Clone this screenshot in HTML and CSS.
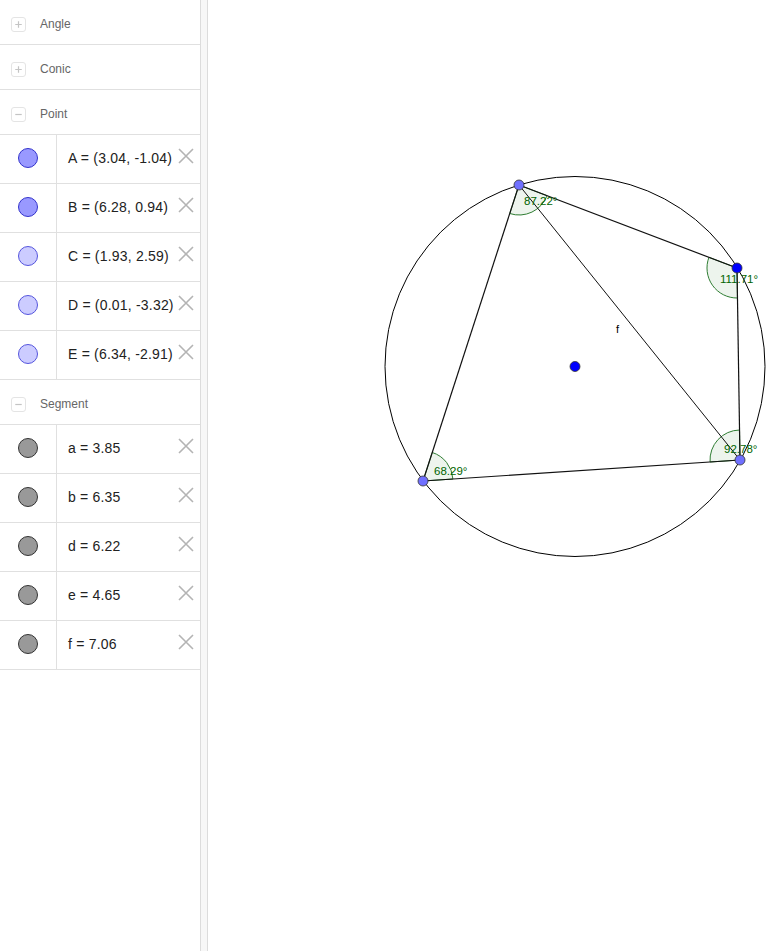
FILE: index.html
```html
<!DOCTYPE html>
<html>
<head>
<meta charset="utf-8">
<link rel="stylesheet" href="styles.css">
</head>
<body>
<div class="app">
  <div class="algebra">
    <div class="group"><span class="toggle"><svg viewBox="0 0 14 14"><path d="M7 3.5v7M3.5 7h7"/></svg></span><span class="gname">Angle</span></div>
    <div class="group"><span class="toggle"><svg viewBox="0 0 14 14"><path d="M7 3.5v7M3.5 7h7"/></svg></span><span class="gname">Conic</span></div>
    <div class="group"><span class="toggle"><svg viewBox="0 0 14 14"><path d="M3.5 7h7"/></svg></span><span class="gname">Point</span></div>
    <div class="item"><div class="mcol"><span class="marble pt"></span></div><div class="expr">A = (3.04, -1.04)</div><span class="del"><svg viewBox="0 0 16 16"><path d="M1 1L15 15M15 1L1 15"/></svg></span></div>
    <div class="item"><div class="mcol"><span class="marble pt"></span></div><div class="expr">B = (6.28, 0.94)</div><span class="del"><svg viewBox="0 0 16 16"><path d="M1 1L15 15M15 1L1 15"/></svg></span></div>
    <div class="item"><div class="mcol"><span class="marble ptl"></span></div><div class="expr">C = (1.93, 2.59)</div><span class="del"><svg viewBox="0 0 16 16"><path d="M1 1L15 15M15 1L1 15"/></svg></span></div>
    <div class="item"><div class="mcol"><span class="marble ptl"></span></div><div class="expr">D = (0.01, -3.32)</div><span class="del"><svg viewBox="0 0 16 16"><path d="M1 1L15 15M15 1L1 15"/></svg></span></div>
    <div class="item"><div class="mcol"><span class="marble ptl"></span></div><div class="expr">E = (6.34, -2.91)</div><span class="del"><svg viewBox="0 0 16 16"><path d="M1 1L15 15M15 1L1 15"/></svg></span></div>
    <div class="group"><span class="toggle"><svg viewBox="0 0 14 14"><path d="M3.5 7h7"/></svg></span><span class="gname">Segment</span></div>
    <div class="item"><div class="mcol"><span class="marble seg"></span></div><div class="expr">a = 3.85</div><span class="del"><svg viewBox="0 0 16 16"><path d="M1 1L15 15M15 1L1 15"/></svg></span></div>
    <div class="item"><div class="mcol"><span class="marble seg"></span></div><div class="expr">b = 6.35</div><span class="del"><svg viewBox="0 0 16 16"><path d="M1 1L15 15M15 1L1 15"/></svg></span></div>
    <div class="item"><div class="mcol"><span class="marble seg"></span></div><div class="expr">d = 6.22</div><span class="del"><svg viewBox="0 0 16 16"><path d="M1 1L15 15M15 1L1 15"/></svg></span></div>
    <div class="item"><div class="mcol"><span class="marble seg"></span></div><div class="expr">e = 4.65</div><span class="del"><svg viewBox="0 0 16 16"><path d="M1 1L15 15M15 1L1 15"/></svg></span></div>
    <div class="item"><div class="mcol"><span class="marble seg"></span></div><div class="expr">f = 7.06</div><span class="del"><svg viewBox="0 0 16 16"><path d="M1 1L15 15M15 1L1 15"/></svg></span></div>
  </div>
  <div class="splitter"></div>
  <div class="canvas">
    <svg class="graphics" viewBox="208 0 560 951" width="560" height="951">
      <g class="sector">
        <path d="M519 185 L547.05 195.68 A30 30 0 0 1 509.73 213.53 Z"/>
        <path d="M737 268 L708.96 257.32 A30 30 0 0 0 737.47 298 Z"/>
        <path d="M740 460 L739.53 430 A30 30 0 0 0 710.07 461.99 Z"/>
        <path d="M423 481 L432.27 452.47 A30 30 0 0 1 452.94 479.02 Z"/>
      </g>
      <circle class="circ" cx="575" cy="366.5" r="190"/>
      <g class="segs">
        <line x1="519" y1="185" x2="737" y2="268"/>
        <line x1="737" y1="268" x2="740" y2="460"/>
        <line x1="740" y1="460" x2="423" y2="481"/>
        <line x1="423" y1="481" x2="519" y2="185"/>
        <line class="diag" x1="519" y1="185" x2="740" y2="460"/>
      </g>
      <g class="alabels">
        <text x="524" y="205">87.22°</text>
        <text x="720" y="283">111.71°</text>
        <text x="724" y="453">92.78°</text>
        <text x="434" y="475">68.29°</text>
      </g>
      <text class="flabel" x="616" y="333">f</text>
      <circle class="p1" cx="519" cy="185" r="5"/>
      <circle class="p2" cx="737" cy="268" r="5"/>
      <circle class="p1" cx="740" cy="460" r="5"/>
      <circle class="p1" cx="423" cy="481" r="5"/>
      <circle class="p2" cx="575" cy="366.5" r="5"/>
    </svg>
  </div>
</div>
</body>
</html>
```
FILE: styles.css
```css
html, body {
  margin: 0;
  padding: 0;
  background: #fff;
}
body {
  font-family: "Liberation Sans", Arial, sans-serif;
  width: 768px;
  height: 951px;
  overflow: hidden;
}
.app {
  display: flex;
  height: 951px;
}
.algebra {
  width: 200px;
  flex: none;
  display: flex;
  flex-direction: column;
}
.group {
  border-bottom: 1px solid #e0e0e0;
  display: flex;
  align-items: center;
  box-sizing: content-box;
  padding-top: 4px;
  height: 40px;
}
.toggle {
  width: 13px;
  height: 13px;
  margin-left: 11px;
  border: 1px solid #e4e4e4;
  border-radius: 3px;
  display: flex;
  align-items: center;
  justify-content: center;
}
.toggle svg {
  width: 13px;
  height: 13px;
  fill: none;
  stroke: #c4c4c4;
  stroke-width: 1.3;
}
.gname {
  margin-left: 14px;
  font-size: 12px;
  color: #666;
}
.item {
  height: 45px;
  padding-bottom: 3px;
  border-bottom: 1px solid #e0e0e0;
  display: flex;
  align-items: stretch;
  position: relative;
}
.mcol {
  width: 56px;
  border-right: 1px solid #e0e0e0;
  display: flex;
  align-items: center;
  justify-content: center;
  flex: none;
  margin-bottom: -3px;
  padding-bottom: 3px;
}
.marble {
  width: 18px;
  height: 18px;
  border-radius: 50%;
  box-sizing: content-box;
}
.pt {
  background: #9999ff;
  border: 1px solid #3333cc;
}
.ptl {
  background: #ccccff;
  border: 1px solid #5555dd;
}
.seg {
  background: #999999;
  border: 1px solid #333333;
}
.expr {
  margin-left: 11px;
  font-size: 14px;
  letter-spacing: 0.2px;
  color: #222;
  display: flex;
  align-items: center;
  white-space: nowrap;
}
.del {
  position: absolute;
  left: 178px;
  top: 13px;
  width: 16px;
  height: 16px;
}
.del svg {
  width: 16px;
  height: 16px;
  fill: none;
  stroke: #b4b4b4;
  stroke-width: 1.6;
}
.splitter {
  width: 6px;
  flex: none;
  background: #f7f7f7;
  border-left: 1px solid #dcdcdc;
  border-right: 1px solid #dcdcdc;
}
.canvas {
  flex: 1;
  background: #fff;
  overflow: hidden;
}
.graphics {
  display: block;
}
.sector path {
  fill: rgba(0, 100, 0, 0.07);
  stroke: #2e7d32;
  stroke-width: 1;
}
.circ {
  fill: none;
  stroke: #000;
  stroke-width: 1;
}
.segs line {
  stroke: #111;
  stroke-width: 1.2;
}
.segs .diag {
  stroke-width: 1;
}
.alabels text {
  font-family: "Liberation Sans", Arial, sans-serif;
  font-size: 11.5px;
  fill: #006400;
}
.flabel {
  font-family: "Liberation Sans", Arial, sans-serif;
  font-size: 11px;
  fill: #000;
}
.p1 {
  fill: #7070ff;
  stroke: #333;
  stroke-width: 0.8;
}
.p2 {
  fill: #0000ff;
  stroke: #333;
  stroke-width: 0.8;
}
```
